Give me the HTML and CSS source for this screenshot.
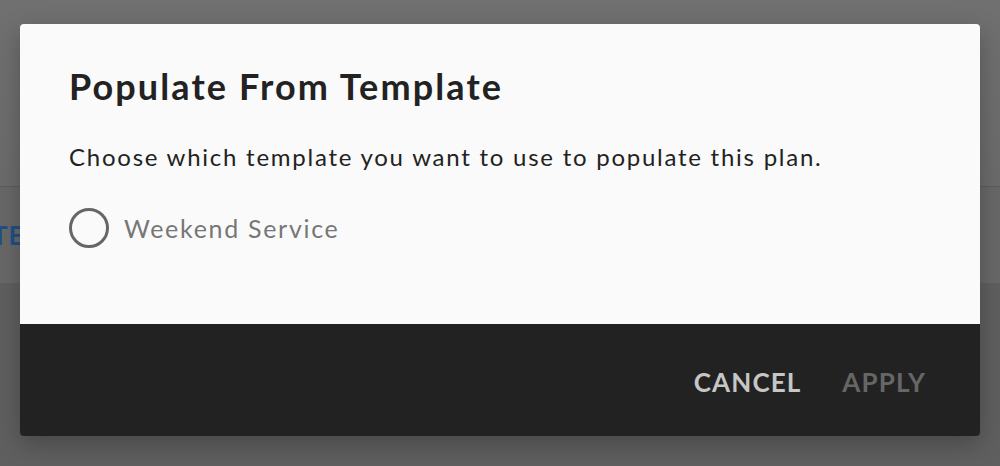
FILE: index.html
```html
<!DOCTYPE html>
<html lang="en">
<head>
<meta charset="utf-8">
<title>Populate From Template</title>
<link rel="stylesheet" href="styles.css">
</head>
<body>
<div class="page">
  <div class="page-header"></div>
  <div class="page-toolbar"><span class="toolbar-link">TE</span></div>
  <div class="page-content"></div>
</div>
<div class="dialog" role="dialog" aria-labelledby="dlg-title">
  <div class="dialog-body">
    <h1 class="dialog-title" id="dlg-title">Populate From Template</h1>
    <p class="dialog-text">Choose which template you want to use to populate this plan.</p>
    <label class="option">
      <span class="radio"></span>
      <span class="option-label">Weekend Service</span>
    </label>
  </div>
  <div class="dialog-footer">
    <button class="btn btn-cancel" type="button">CANCEL</button>
    <button class="btn btn-apply" type="button" disabled>APPLY</button>
  </div>
</div>
</body>
</html>
```

FILE: styles.css
```css
* { box-sizing: border-box; }
html, body {
  margin: 0;
  padding: 0;
  width: 1000px;
  height: 466px;
  overflow: hidden;
}
body {
  background: #5f5f5f;
  font-family: Lato, "Liberation Sans", sans-serif;
  position: relative;
}
.page {
  display: flex;
  flex-direction: column;
  height: 466px;
}
.page-header {
  height: 187px;
  background: linear-gradient(180deg, #707070 0%, #6b6b6b 100%);
  border-bottom: 1px solid #5b5b5b;
}
.page-toolbar {
  height: 96px;
  background: #686868;
  display: flex;
  align-items: center;
  text-indent: -8px;
  overflow: hidden;
}
.toolbar-link {
  color: #1e4f86;
  font-weight: 700;
  font-size: 26px;
  letter-spacing: 1px;
  white-space: nowrap;
}
.page-content {
  flex: 1;
  background: #5f5f5f;
}
.dialog {
  position: absolute;
  left: 20px;
  top: 24px;
  width: 960px;
  height: 412px;
  border-radius: 4px;
  overflow: hidden;
  display: flex;
  flex-direction: column;
  box-shadow: 0 8px 24px rgba(0, 0, 0, 0.25);
}
.dialog-body {
  height: 300px;
  background: #fafafa;
  padding: 40px 48px 0 49px;
}
.dialog-title {
  margin: 0;
  font-size: 36px;
  line-height: 44px;
  font-weight: 700;
  letter-spacing: 2.1px;
  color: #222;
}
.dialog-text {
  margin: 33px 0 0;
  font-size: 24px;
  line-height: 32px;
  letter-spacing: 1.75px;
  color: #222;
}
.option {
  margin-top: 35px;
  display: flex;
  align-items: center;
  gap: 15px;
  height: 40px;
}
.radio {
  width: 40px;
  height: 40px;
  border: 3px solid #666;
  border-radius: 50%;
  flex: none;
}
.option-label {
  font-size: 25px;
  line-height: 32px;
  letter-spacing: 1.7px;
  color: #777;
}
.dialog-footer {
  flex: 1;
  background: #222;
  display: flex;
  justify-content: flex-end;
  align-items: center;
  gap: 41px;
  padding: 4px 54px 0 0;
}
.btn {
  background: none;
  border: none;
  padding: 0;
  font-family: Lato, "Liberation Sans", sans-serif;
  font-weight: 700;
  font-size: 26px;
  line-height: 31px;
  letter-spacing: 1.1px;
  cursor: pointer;
}
.btn-cancel { color: #c6c6c6; }
.btn-apply { color: #666; }
```
